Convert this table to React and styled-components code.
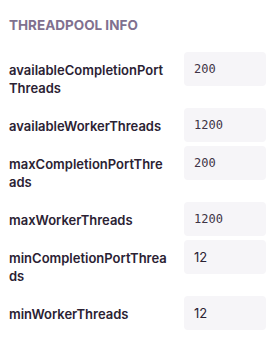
import React from "react";
import styled, { createGlobalStyle } from "styled-components";

const rows = [
  { key: "availableCompletionPortThreads", value: "200", mono: true },
  { key: "availableWorkerThreads", value: "1200", mono: true },
  { key: "maxCompletionPortThreads", value: "200", mono: true },
  { key: "maxWorkerThreads", value: "1200", mono: true },
  { key: "minCompletionPortThreads", value: "12", mono: false },
  { key: "minWorkerThreads", value: "12", mono: false },
];

function App() {
  return (
    <>
      <GlobalStyle />
      <SCPanel>
        <SCTitle>Threadpool Info</SCTitle>
        <SCTable>
          {rows.map((item) => (
            <SCRow key={item.key}>
              <SCKey>{item.key}</SCKey>
              <SCValue $mono={item.mono}>{item.value}</SCValue>
            </SCRow>
          ))}
        </SCTable>
      </SCPanel>
    </>
  );
}

export default App;

const GlobalStyle = createGlobalStyle`
  body {
    margin: 0;
    background: #fff;
    font-family: Inter, "Noto Sans", sans-serif;
  }
`;

const SCPanel = styled.section`
  padding: 16px 2px 0 9px;
`;

const SCTitle = styled.h3`
  margin: 0 0 18px;
  font-size: 13.5px;
  line-height: 18px;
  font-weight: 700;
  text-transform: uppercase;
  color: #80708f;
`;

const SCTable = styled.div`
  display: flex;
  flex-direction: column;
  gap: 4px;
`;

const SCRow = styled.div`
  display: grid;
  grid-template-columns: 161px 1fr;
  column-gap: 14px;
  align-items: start;
`;

const SCKey = styled.div`
  padding: 9px 0 7px;
  font-size: 13px;
  line-height: 18px;
  font-weight: 600;
  color: #2b2233;
  word-break: break-all;
`;

const SCValue = styled.div`
  padding: 8px 10px;
  min-height: 18px;
  border-radius: 4px;
  background: #f6f5f8;
  font-family: ${(p) =>
    p.$mono ? '"DejaVu Sans Mono", monospace' : 'Inter, "Noto Sans", sans-serif'};
  font-size: ${(p) => (p.$mono ? "12px" : "13px")};
  line-height: 18px;
  color: ${(p) => (p.$mono ? "#3e3446" : "#2b2233")};
`;
